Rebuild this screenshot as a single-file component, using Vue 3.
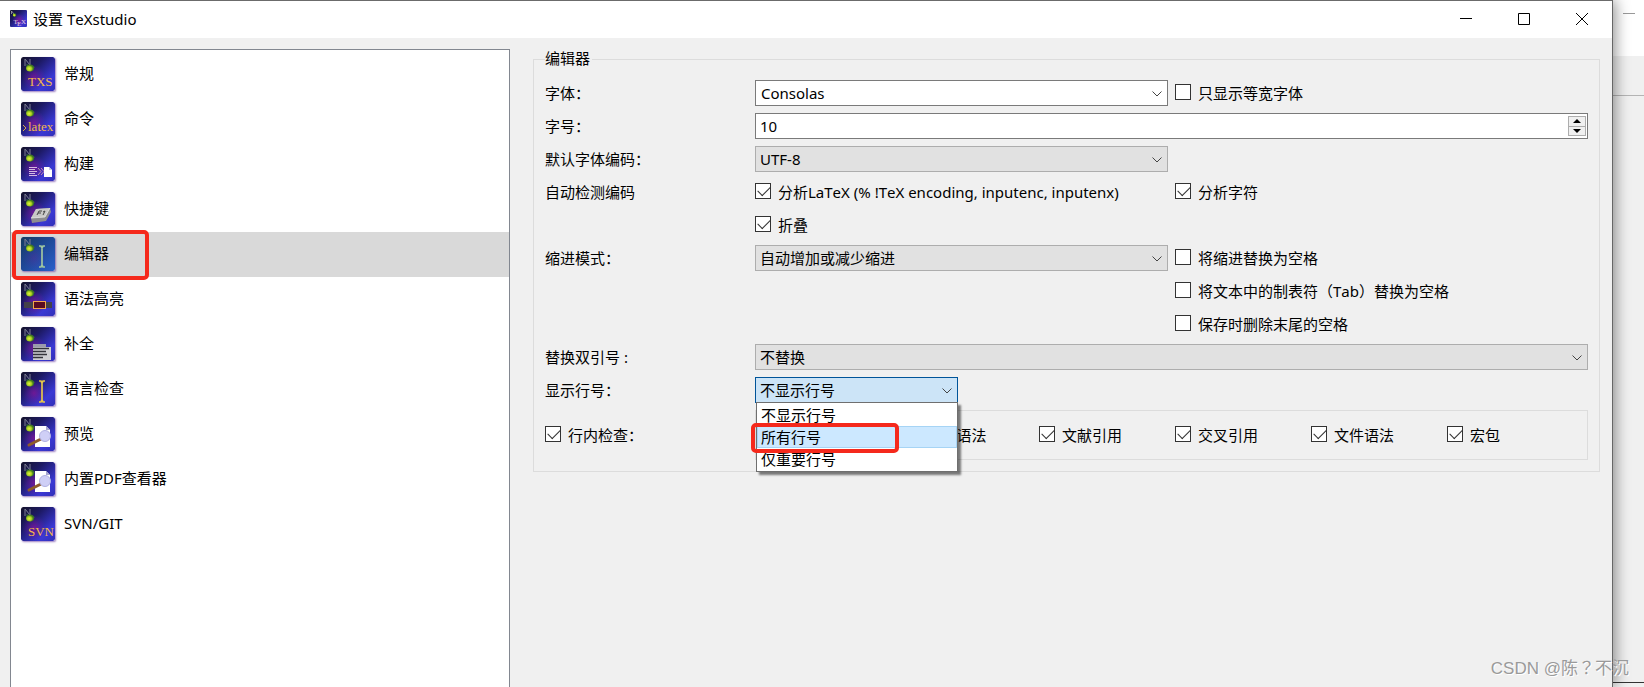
<script setup>
import { ref } from 'vue'

const pages = [
  { name: '常规', icon: 'text', word: 'TXS', x: 7, size: 13 },
  { name: '命令', icon: 'text', word: 'latex', x: 7, size: 13, prompt: true },
  { name: '构建', icon: 'build' },
  { name: '快捷键', icon: 'key' },
  { name: '编辑器', icon: 'caret' },
  { name: '语法高亮', icon: 'highlight' },
  { name: '补全', icon: 'complete' },
  { name: '语言检查', icon: 'caret' },
  { name: '预览', icon: 'preview' },
  { name: '内置PDF查看器', icon: 'preview' },
  { name: 'SVN/GIT', icon: 'text', word: 'SVN', x: 7, size: 13 },
]
const current = ref(4)
const lineNumberModes = ['不显示行号', '所有行号', '仅重要行号']
const hovered = ref(1)
const size = ref(10)
const inlineChecks = ['文献引用', '交叉引用', '文件语法', '宏包']
</script>

<template>
  <div class="desktop">
    <svg class="defs" width="0" height="0" aria-hidden="true">
      <defs>
        <linearGradient id="tile" x1="0" y1="0" x2="1" y2="1">
          <stop offset="0" stop-color="#15142a" />
          <stop offset="0.35" stop-color="#1d1a66" />
          <stop offset="0.75" stop-color="#3a38d4" />
          <stop offset="1" stop-color="#3330b8" />
        </linearGradient>
        <linearGradient id="tileActive" x1="0" y1="0" x2="1" y2="1">
          <stop offset="0" stop-color="#163a5e" />
          <stop offset="0.4" stop-color="#1c4590" />
          <stop offset="1" stop-color="#2a60cc" />
        </linearGradient>
        <radialGradient id="glow">
          <stop offset="0" stop-color="#8a1496" stop-opacity="0.8" />
          <stop offset="1" stop-color="#6a1ab0" stop-opacity="0" />
        </radialGradient>
        <radialGradient id="ball" cx="0.4" cy="0.6">
          <stop offset="0" stop-color="#e6f23a" />
          <stop offset="0.6" stop-color="#a4cc20" />
          <stop offset="1" stop-color="#3f7a20" />
        </radialGradient>
      </defs>
    </svg>

    <main class="window">
      <header class="titlebar">
        <svg class="app-icon" viewBox="0 0 34 34" aria-hidden="true">
          <rect width="34" height="34" rx="2" fill="url(#tile)" />
          <circle cx="18" cy="20" r="13" fill="url(#glow)" />
          <path d="M3 2v6M3 2l5 6" stroke="#a9a9b5" stroke-width="1.5" />
          <circle cx="9" cy="10" r="3.5" fill="url(#ball)" />
          <text x="7" y="28" class="tile-word" font-size="14" fill="#e6cfe0">T</text>
          <text x="14" y="32" class="tile-word" font-size="14" fill="#e6cfe0">E</text>
          <text x="22" y="28" class="tile-word" font-size="14" fill="#e6cfe0">X</text>
        </svg>
        <h1>设置 TeXstudio</h1>
        <button type="button" aria-label="最小化"><svg width="12" height="12"><path d="M0 5.5h12" /></svg></button>
        <button type="button" aria-label="最大化"><svg width="12" height="12"><path d="M.5.5h11v11H.5z" /></svg></button>
        <button type="button" aria-label="关闭"><svg width="12" height="12"><path d="M0 0l12 12M12 0L0 12" /></svg></button>
      </header>

      <div class="body">
        <nav class="pages">
          <button
            v-for="(p, i) in pages"
            :key="p.name"
            type="button"
            class="page"
            :class="{ active: i === current }"
            @click="current = i"
          >
            <svg class="tile" viewBox="0 0 34 34" width="34" height="34" aria-hidden="true">
              <rect width="34" height="34" rx="2" :fill="i === 4 ? 'url(#tileActive)' : 'url(#tile)'" />
              <ellipse cx="13" cy="21" rx="12" ry="13" fill="url(#glow)" :opacity="i === 4 ? 0.3 : 0.9" />
              <path d="M4 9V2l5 6V2" fill="none" stroke="#7d7f94" stroke-width="1" />
              <path d="M5 7l9 3-5 5z" fill="#3d7a3c" opacity="0.8" />
              <ellipse cx="9" cy="11" rx="4" ry="3.5" fill="url(#ball)" />
              <template v-if="p.icon === 'text'">
                <path v-if="p.prompt" d="M2 23l3 3-3 3" fill="none" stroke="#d9a94c" stroke-width="1" />
                <text :x="p.x" y="29" class="tile-word" :font-size="p.size" fill="#f3b84a">{{ p.word }}</text>
              </template>
              <g v-else-if="p.icon === 'build'">
                <path d="M8 20.5h8M8 22.5h6M8 24.5h8M8 26.5h6M8 28.5h8" stroke="#d3b9e2" />
                <path d="M17 21l3 3.500-3 3.500M20 21l3 3.500-3 3.500" fill="none" stroke="#c58bb0" />
                <path d="M23 20h5l3 3v7h-8z" fill="#fff" />
                <path d="M28 20v3h3" fill="#c9c9e6" />
              </g>
              <g v-else-if="p.icon === 'key'">
                <path d="M10 26l5-9 14-1 1 4-5 9-14 2z" fill="#8d8d90" />
                <path d="M10 26l5-9 14-1-5 9z" fill="#c9c9c7" />
                <path d="M10 26l14-1 5-9" fill="none" stroke="#eee" stroke-width=".7" />
                <path d="M16 23l2-4h3M17 21h3M22 23l2-4-2 1" fill="none" stroke="#444" />
              </g>
              <path
                v-else-if="p.icon === 'caret'"
                d="M18 9h2l1 2 1-2h2M21 10v19M18 30h2l1-2 1 2h2"
                fill="none"
                :stroke="i === 4 ? '#9fc7a0' : '#e3c54c'"
                stroke-width="1.700"
              />
              <g v-else-if="p.icon === 'highlight'">
                <rect x="3" y="20" width="28" height="6" fill="#44414a" />
                <rect x="12.500" y="19.500" width="12" height="7" fill="#5b0c22" stroke="#f4a64c" />
              </g>
              <g v-else-if="p.icon === 'complete'">
                <rect x="12" y="17" width="13" height="3" fill="#9a9aac" />
                <rect x="12" y="20" width="18" height="13" fill="#cfcfd4" />
                <path d="M12 21.500h16M12 24.500h13M12 27.500h14M12 30.500h10" stroke="#34343c" stroke-width="1.500" />
              </g>
              <g v-else>
                <path d="M14 9h11l4 4v17H14z" fill="#fff" />
                <path d="M25 9v4h4" fill="#a6a6cf" />
                <path d="M20 22l-12 6" stroke="#8f5a2a" stroke-width="3" stroke-linecap="round" />
                <circle cx="24" cy="19" r="5.500" fill="#cfcff6" stroke="#b1b1e2" />
              </g>
            </svg>
            <span>{{ p.name }}</span>
            <i v-if="i === 4" class="mark mark-page"></i>
          </button>
        </nav>

        <form class="panel" @submit.prevent>
          <fieldset class="group">
            <legend>编辑器</legend>

            <label for="font" class="c1">字体：</label>
            <div class="combo half editable">
              <select id="font"><option>Consolas</option></select>
              <svg width="10" height="6"><path d="M.5.5L5 5 9.500.5" /></svg>
            </div>
            <label class="check right"><input type="checkbox" />只显示等宽字体</label>

            <label for="size" class="c1">字号：</label>
            <div class="spin wide">
              <input id="size" v-model="size" type="text" />
              <div class="steps">
                <button type="button" aria-label="增大" @click="size++"><svg width="8" height="4"><path d="M0 4l4-4 4 4z" /></svg></button>
                <button type="button" aria-label="减小" @click="size--"><svg width="8" height="4"><path d="M0 0l4 4 4-4z" /></svg></button>
              </div>
            </div>

            <label for="enc" class="c1">默认字体编码：</label>
            <div class="combo half">
              <select id="enc"><option>UTF-8</option></select>
              <svg width="10" height="6"><path d="M.5.5L5 5 9.500.5" /></svg>
            </div>

            <span class="c1">自动检测编码</span>
            <label class="check half"><input type="checkbox" checked />分析LaTeX (% !TeX encoding, inputenc, inputenx)</label>
            <label class="check right"><input type="checkbox" checked />分析字符</label>

            <label class="check half"><input type="checkbox" checked />折叠</label>

            <label for="indent" class="c1">缩进模式：</label>
            <div class="combo half">
              <select id="indent"><option>自动增加或减少缩进</option></select>
              <svg width="10" height="6"><path d="M.5.5L5 5 9.500.5" /></svg>
            </div>
            <label class="check right"><input type="checkbox" />将缩进替换为空格</label>
            <label class="check right"><input type="checkbox" />将文本中的制表符（Tab）替换为空格</label>
            <label class="check right"><input type="checkbox" />保存时删除末尾的空格</label>

            <label for="quotes" class="c1">替换双引号 :</label>
            <div class="combo wide">
              <select id="quotes"><option>不替换</option></select>
              <svg width="10" height="6"><path d="M.5.5L5 5 9.500.5" /></svg>
            </div>

            <label for="lines" class="c1">显示行号：</label>
            <div class="combo quarter open">
              <select id="lines"><option>不显示行号</option></select>
              <svg width="10" height="6"><path d="M.5.5L5 5 9.500.5" /></svg>
              <ul class="menu">
                <li
                  v-for="(m, i) in lineNumberModes"
                  :key="m"
                  :class="{ hover: i === hovered }"
                  @mouseenter="hovered = i"
                >
                  {{ m }}<i v-if="i === 1" class="mark mark-option"></i>
                </li>
              </ul>
            </div>

            <label class="check c1 inline"><input type="checkbox" checked />行内检查：</label>
            <div class="checks wide">
              <span class="partial">语法</span>
              <label v-for="c in inlineChecks" :key="c" class="check"><input type="checkbox" checked />{{ c }}</label>
            </div>
          </fieldset>
        </form>
      </div>
    </main>

    <aside class="behind">
      <div class="behind-title"><i></i></div>
      <div class="behind-bar"></div>
      <div class="behind-body"></div>
      <div class="behind-foot"></div>
    </aside>
    <p class="watermark">CSDN @陈？不沉</p>
  </div>
</template>

<style>
html,
body {
  overflow: hidden;
}
</style>

<style scoped>
* {
  box-sizing: border-box;
}
.desktop {
  position: relative;
  display: flex;
  height: 100vh;
  overflow: hidden;
  background: #f0f0f0;
  color: #000;
  font: 15px/20px "Noto Sans", "Noto Sans CJK SC", sans-serif;
  font-kerning: none;
}
.defs {
  position: absolute;
}
button,
input,
select {
  font: inherit;
  font-kerning: none;
  color: inherit;
  margin: 0;
}
.window {
  position: relative;
  z-index: 1;
  flex: 1;
  display: flex;
  flex-direction: column;
  border-top: 1px solid #6b6b6b;
  border-right: 1px solid #666;
  background: #f0f0f0;
  box-shadow: 2px 0 14px rgba(0, 0, 0, 0.45);
}
.titlebar {
  display: flex;
  align-items: center;
  height: 37px;
  padding: 0 1px 2px 10px;
  background: #fff;
}
.titlebar h1 {
  flex: 1;
  margin: 0 0 0 6px;
  font-size: 15px;
  font-weight: 400;
}
.titlebar button {
  display: grid;
  place-items: center;
  width: 58px;
  height: 35px;
  padding: 0;
  border: 0;
  background: none;
}
.titlebar button path {
  fill: none;
  stroke: #000;
}
.app-icon {
  width: 17px;
  height: 17px;
}
.tile-word {
  font-family: "Liberation Serif", serif;
}
.body {
  flex: 1;
  display: flex;
  gap: 23px;
  padding: 11px 12px 0 10px;
}
.pages {
  flex: 0 0 500px;
  padding-top: 2px;
  border: 1px solid #828790;
  border-bottom: 0;
  background: #fff;
}
.page {
  position: relative;
  display: flex;
  align-items: center;
  gap: 9px;
  width: 100%;
  height: 45px;
  padding: 0 10px 2px;
  border: 0;
  background: none;
  text-align: left;
}
.page span {
  padding-bottom: 2px;
}
.page.active {
  background: #d9d9d9;
}
.tile {
  border-radius: 2px;
  box-shadow: 1px 1px 2px rgba(90, 40, 150, 0.6);
}
.mark {
  position: absolute;
  z-index: 3;
  border: 4px solid #f5291c;
  border-radius: 5px;
  pointer-events: none;
}
.mark-page {
  top: -2px;
  left: 1px;
  width: 137px;
  height: 50px;
}
.mark-option {
  top: -3px;
  left: -6px;
  width: 148px;
  height: 30px;
}
.panel {
  flex: 1;
}
.group {
  position: relative;
  display: grid;
  grid-template-columns: repeat(5, minmax(0, 1fr));
  grid-auto-rows: minmax(26px, auto);
  gap: 7px;
  align-items: center;
  margin: 0;
  padding: 11px 11px 11px;
  border: 1px solid #dcdcdc;
}
.group legend {
  padding: 0 2px 2px 0;
  line-height: 18px;
}
.c1 {
  grid-column: 1;
}
.quarter {
  grid-column: 2;
}
.half {
  grid-column: 2 / 4;
}
.wide {
  grid-column: 2 / 6;
}
.right {
  grid-column: 4 / 6;
}
.combo {
  position: relative;
  height: 26px;
}
.combo select {
  width: 100%;
  height: 26px;
  padding: 0 20px 0 4px;
  border: 1px solid #adadad;
  border-radius: 0;
  background: #e1e1e1;
  appearance: none;
}
.combo > svg {
  position: absolute;
  top: 11px;
  right: 6px;
  fill: none;
  stroke: #444;
  pointer-events: none;
}
.combo.editable select {
  padding-left: 5px;
  border-color: #7a7a7a;
  background: #fff;
}
.combo.open select {
  border-color: #005499;
  background: #cce4f7;
}
.menu {
  position: absolute;
  z-index: 2;
  top: 25px;
  left: 1px;
  right: 0;
  margin: 0;
  padding: 1px 0;
  border: 1px solid #6f6f6f;
  background: #fff;
  box-shadow: 3px 3px 2px rgba(0, 0, 0, 0.5);
  list-style: none;
}
.menu li {
  position: relative;
  height: 22px;
  padding-left: 4px;
  line-height: 22px;
}
.menu li.hover {
  background: #cce8ff;
  box-shadow: inset 0 0 0 1px #a6d4f5;
}
.spin {
  display: flex;
  height: 26px;
  padding: 2px 1px 2px 4px;
  border: 1px solid #7a7a7a;
  background: #fff;
}
.spin input {
  flex: 1;
  min-width: 0;
  padding: 0;
  border: 0;
  outline: 0;
  background: none;
}
.steps {
  display: flex;
  flex-direction: column;
  width: 18px;
}
.steps button {
  display: grid;
  place-items: center;
  flex: 1;
  min-height: 0;
  padding: 0;
  border: 1px solid #adadad;
  background: #f0f0f0;
}
.steps button + button {
  border-top: 0;
}
.check {
  display: flex;
  align-items: center;
  gap: 7px;
  white-space: nowrap;
}
.check input {
  flex: none;
  width: 16px;
  height: 16px;
  margin-bottom: 2px;
  border: 1px solid #333;
  background: #fff;
  appearance: none;
}
.check input:checked::before {
  content: "";
  display: block;
  width: 11px;
  height: 6px;
  margin: 2px 0 0 2px;
  border: solid #333;
  border-width: 0 0 1px 1px;
  transform: rotate(-45deg);
}
.checks {
  display: grid;
  grid-template-columns: repeat(6, minmax(0, 1fr));
  gap: 7px;
  align-items: center;
  height: 50px;
  padding: 0 11px;
  border: 1px solid #dcdcdc;
}
.checks .check:first-of-type {
  grid-column: 3;
}
.partial {
  grid-column: 2;
  justify-self: center;
  padding-left: 8px;
}
.behind {
  display: flex;
  flex-direction: column;
  flex: 0 0 31px;
}
.behind-title {
  height: 56px;
  padding: 13px 0 0 10px;
  background: #fff;
}
.behind-title i {
  display: block;
  width: 12px;
  height: 1px;
  background: #999;
}
.behind-bar {
  height: 40px;
  border-bottom: 1px solid #b4b4b4;
}
.behind-body {
  flex: 1;
  border-bottom: 1px solid #333;
}
.behind-foot {
  height: 4px;
}
.watermark {
  position: absolute;
  z-index: 4;
  right: 15px;
  bottom: 7px;
  margin: 0;
  color: #9a9a9a;
  font: 17px/22px "Liberation Sans", "Noto Sans CJK TC", sans-serif;
  text-shadow: 1px 1px 0 #fff;
}
</style>
